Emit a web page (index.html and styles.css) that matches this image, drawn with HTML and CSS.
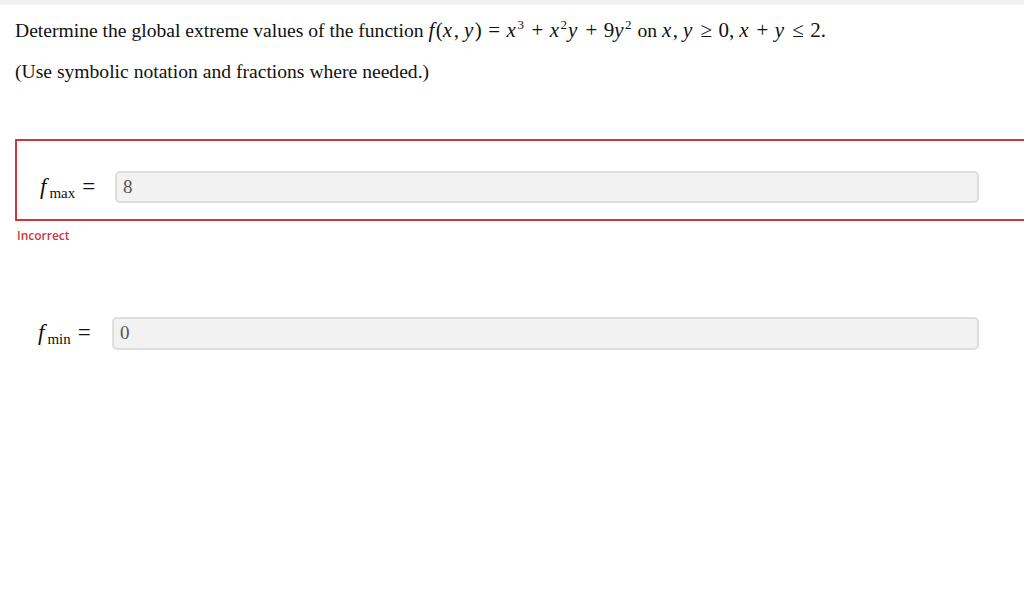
FILE: index.html
```html
<!DOCTYPE html>
<html>
<head>
<meta charset="utf-8">
<link rel="stylesheet" href="styles.css">
</head>
<body>
<div class="topbar"></div>
<div class="content">
  <p class="q">Determine the global extreme values of the function <span class="m"><i>f</i>(<i>x</i>,<span class="sp"></span><i>y</i>)<span class="op">=</span><i>x</i><sup>3</sup><span class="op">+</span><i>x</i><sup>2</sup><i>y</i><span class="op">+</span>9<i>y</i><sup>2</sup></span> on <span class="m"><i>x</i>,<span class="sp"></span><i>y</i><span class="op">≥</span>0,<span class="sp"></span><i>x</i><span class="op">+</span><i>y</i><span class="op">≤</span>2.</span></p>
  <p class="note">(Use symbolic notation and fractions where needed.)</p>

  <div class="answer wrong">
    <div class="label"><i>f</i><sub>max</sub><span class="eq">=</span></div>
    <div class="field">8</div>
  </div>
  <div class="feedback">Incorrect</div>

  <div class="answer plain">
    <div class="label"><i>f</i><sub>min</sub><span class="eq">=</span></div>
    <div class="field">0</div>
  </div>
</div>
</body>
</html>
```
FILE: styles.css
```css
html, body {
  margin: 0;
  padding: 0;
  background: #fff;
  overflow: hidden;
}
body {
  font-family: "Liberation Serif", "Times New Roman", serif;
  color: #111;
  width: 1024px;
}
.topbar {
  height: 5px;
  background: #f2f2f2;
}
.content {
  padding-left: 15px;
}
.q {
  margin: 0;
  padding-top: 15px;
  font-size: 19.6px;
  line-height: 20px;
  white-space: nowrap;
}
.m {
  font-size: 21px;
}
.m i {
  font-style: italic;
  margin-right: 1.5px;
}
.sp {
  display: inline-block;
  width: 5px;
}
.op {
  margin: 0 6.5px;
}
.q sup {
  font-size: 13px;
  line-height: 0;
  vertical-align: 8px;
  margin-right: 1px;
}
.note {
  margin: 0;
  padding-top: 21px;
  font-size: 19.6px;
  line-height: 20px;
}
.answer {
  display: flex;
  align-items: center;
}
.answer.wrong {
  margin-top: 57px;
  height: 48px;
  width: 1020px;
  border: 2px solid #c8393a;
  border-right: none;
  padding: 30px 0 0 23px;
  box-sizing: content-box;
  align-items: flex-start;
}
.answer.plain {
  margin-top: 72px;
  height: 34px;
  padding-left: 23px;
}
.label {
  font-size: 20px;
  width: 75px;
  flex: none;
  white-space: nowrap;
  padding-top: 3px;
}
.answer.plain .label {
  width: 74px;
  padding-top: 0;
}
.label i {
  font-size: 23px;
}
.label sub {
  font-size: 15px;
  vertical-align: -4px;
  line-height: 0;
  margin-left: 3px;
}
.eq {
  margin-left: 7px;
  font-size: 23px;
}
.field {
  box-sizing: border-box;
  width: 864px;
  height: 32px;
  background: #f2f2f2;
  border: 2px solid #dedede;
  border-radius: 5px;
  padding-left: 6px;
  font-size: 19px;
  line-height: 27px;
  color: #555;
}
.answer.plain .field {
  width: 867px;
  height: 33px;
}
.feedback {
  margin-top: 7px;
  padding-left: 2px;
  font-family: "Open Sans", "Liberation Sans", sans-serif;
  font-weight: 600;
  font-size: 12px;
  line-height: 16px;
  color: #c8393a;
}
```
